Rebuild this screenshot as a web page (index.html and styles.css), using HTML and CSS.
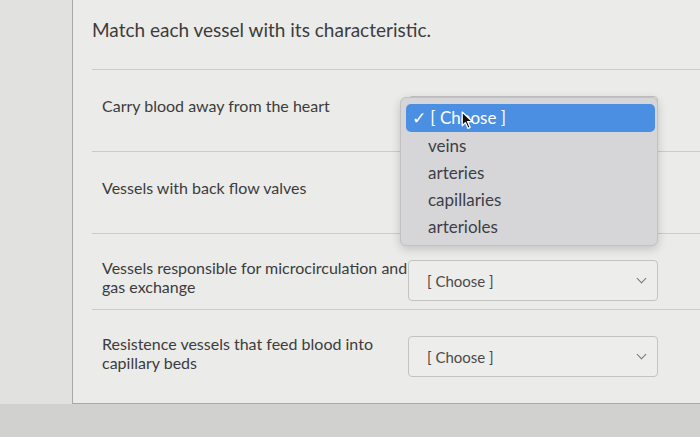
FILE: index.html
```html
<!DOCTYPE html>
<html lang="en">
<head>
    <meta charset="UTF-8">
    <meta name="viewport" content="width=device-width, initial-scale=1.0">
    <title>Matching question</title>
    <link rel="stylesheet" href="styles.css">
</head>
<body>
    <div class="screen">
        <div class="gutter"></div>
        <div class="card">
            <div class="question">Match each vessel with its characteristic.</div>

            <div class="row">
                <div class="prompt">Carry blood away from the heart</div>
                <div class="select"><span>[ Choose ]</span><span class="chev"></span></div>
            </div>
            <div class="row">
                <div class="prompt">Vessels with back flow valves</div>
                <div class="select"><span>[ Choose ]</span><span class="chev"></span></div>
            </div>
            <div class="row short">
                <div class="prompt two-line">Vessels responsible for microcirculation and gas exchange</div>
                <div class="select"><span>[ Choose ]</span><span class="chev"></span></div>
            </div>
            <div class="row last">
                <div class="prompt two-line">Resistence vessels that feed blood into capillary beds</div>
                <div class="select"><span>[ Choose ]</span><span class="chev"></span></div>
            </div>

            <!-- open native menu of the first select -->
            <div class="menu">
                <div class="option selected">✓ [ Choose ]</div>
                <div class="option">veins</div>
                <div class="option">arteries</div>
                <div class="option">capillaries</div>
                <div class="option">arterioles</div>
                <svg class="cursor" width="13" height="19" viewBox="0 0 12 18">
                    <path d="M1 1 L1 14 L4 11 L6.5 16.5 L8.5 15.5 L6 10 L10.5 10 Z" fill="#111" stroke="#fff" stroke-width="1.2" stroke-linejoin="round"/>
                </svg>
            </div>
        </div>
    </div>
</body>
</html>
```

FILE: styles.css
```css
body {
    margin: 0;
    background: #d1d1cf;
    font-family: Lato, "Open Sans", sans-serif;
    color: #3c3c3c;
}
.screen {
    display: flex;
    height: 404px;
}
.gutter {
    width: 72px;
    background: #e1e1df;
}
.card {
    position: relative;
    flex: 1;
    background: #ebebe9;
    border-left: 1px solid #a9a9a7;
    border-bottom: 1px solid #a9a9a7;
}
.question {
    font-size: 19px;
    padding-top: 18px;
    height: 51px;
    margin-left: 19px;
    border-bottom: 1px solid #cbcbc9;
}
.row {
    display: flex;
    align-items: flex-start;
    height: 55px;
    padding: 26px 0 0 10px;
    margin-left: 19px;
    border-bottom: 1px solid #cbcbc9;
}
.row.short {
    height: 49px;
}
.row.last {
    border-bottom: none;
}
.prompt {
    width: 306px;
    font-size: 16px;
    line-height: 20px;
}
.prompt.two-line {
    line-height: 19px;
    margin-top: -2px;
}
.select {
    display: flex;
    align-items: center;
    justify-content: space-between;
    width: 250px;
    height: 41px;
    box-sizing: border-box;
    padding: 0 12px 0 18px;
    border: 1px solid #c3c3c1;
    border-radius: 4px;
    background: #ededeb;
    font-size: 15px;
    color: #4a4a4a;
}
.chev {
    width: 6px;
    height: 6px;
    border-right: 1.5px solid #777;
    border-bottom: 1.5px solid #777;
    transform: rotate(45deg);
    margin-top: -4px;
}
.menu {
    position: absolute;
    left: 327px;
    top: 97px;
    width: 258px;
    box-sizing: border-box;
    padding: 6px 2px 5px 5px;
    background: #d6d6d8;
    border: 1px solid #c2c2c4;
    border-radius: 6px;
    box-shadow: 0 3px 10px rgba(0, 0, 0, 0.18);
    font-size: 17px;
    color: #3e3e46;
}
.option {
    height: 27px;
    line-height: 27px;
    padding-left: 22px;
}
.option.selected {
    height: 28px;
    line-height: 28px;
    padding-left: 6px;
    background: #4a8fe2;
    color: #fff;
    border-radius: 5px;
}
.cursor {
    position: absolute;
    left: 60px;
    top: 13px;
}
```
